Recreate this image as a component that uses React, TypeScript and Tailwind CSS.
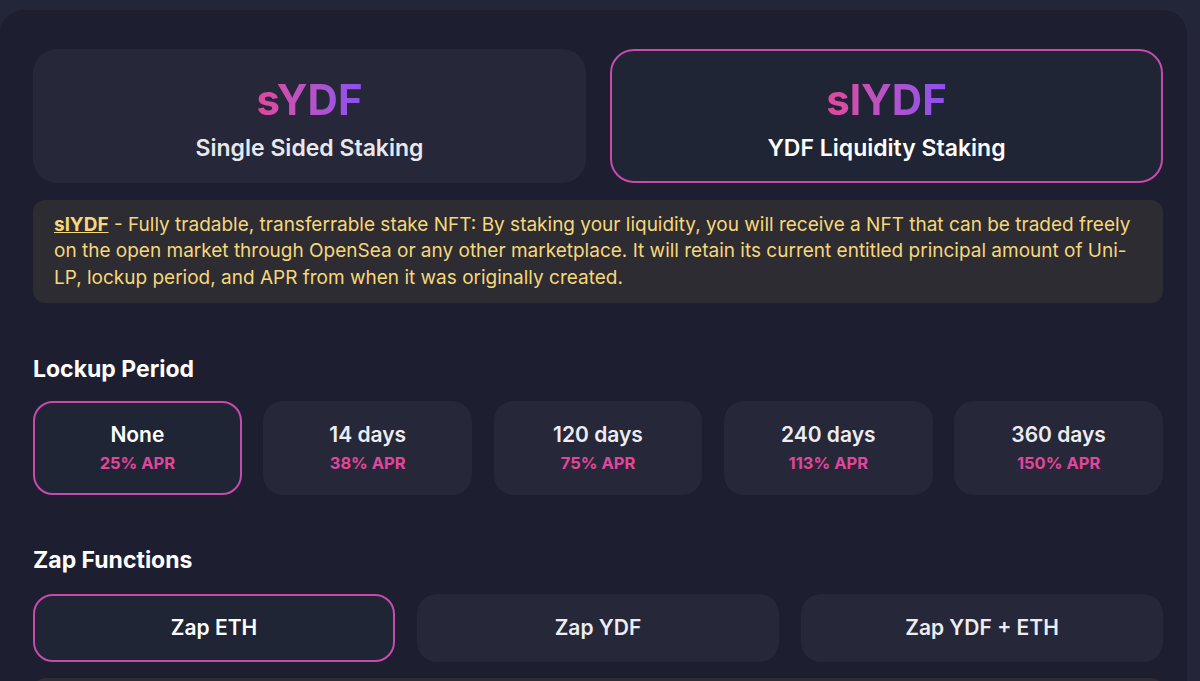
import { useState } from "react";

const lockups = [
    { label: "None", apr: "25% APR" },
    { label: "14 days", apr: "38% APR" },
    { label: "120 days", apr: "75% APR" },
    { label: "240 days", apr: "113% APR" },
    { label: "360 days", apr: "150% APR" },
];

const zaps = ["Zap ETH", "Zap YDF", "Zap YDF + ETH"];

const StakeCard = ({
    token,
    title,
    active,
    onClick,
}: {
    token: string;
    title: string;
    active: boolean;
    onClick: () => void;
}) => (
    <button
        onClick={onClick}
        className={`flex h-[134px] flex-col items-center justify-center rounded-[24px] border-2 pt-[6px] ${
            active ? "border-[#c64bad] bg-[#1f2535]" : "border-transparent bg-[#262738]"
        }`}
    >
        <span className="bg-gradient-to-r from-[#e2469b] to-[#8a4ff0] bg-clip-text text-[42px] font-bold leading-[48px] text-transparent">
            {token}
        </span>
        <span className={`mt-[10px] text-[23px] font-semibold leading-7 ${active ? "text-white" : "text-[#e8e8ee]"}`}>
            {title}
        </span>
    </button>
);

export default function App() {
    const [pool, setPool] = useState(1);
    const [lockup, setLockup] = useState(0);
    const [zap, setZap] = useState(0);

    return (
        <div
            className="min-h-[681px] bg-[#232538] pr-[13px] pt-[10px]"
            style={{ fontFamily: "Inter, 'Noto Sans', sans-serif" }}
        >
            <div className="h-[700px] rounded-tl-[24px] rounded-tr-[24px] bg-[#1d1e2f] pl-[33px] pr-[24px] pt-[39px]">
                <div className="grid grid-cols-2 gap-[24px]">
                    <StakeCard token="sYDF" title="Single Sided Staking" active={pool === 0} onClick={() => setPool(0)} />
                    <StakeCard token="slYDF" title="YDF Liquidity Staking" active={pool === 1} onClick={() => setPool(1)} />
                </div>

                <div className="mt-[17px] rounded-[12px] bg-[#2d2c32] px-[21px] py-[11.5px] text-[19px] leading-[26.5px] text-[#f6d77a]">
                    <span className="font-bold underline">slYDF</span> - Fully tradable, transferrable stake NFT: By
                    staking your liquidity, you will receive a NFT that can be traded freely on the open market through
                    OpenSea or any other marketplace. It will retain its current entitled principal amount of Uni-LP,
                    lockup period, and APR from when it was originally created.
                </div>

                <h2 className="mt-[52px] text-[23px] font-bold leading-7 text-white">Lockup Period</h2>
                <div className="mt-[18px] grid grid-cols-5 gap-[21.5px]">
                    {lockups.map((l, i) => (
                        <button
                            key={l.label}
                            onClick={() => setLockup(i)}
                            className={`flex h-[94px] flex-col items-center justify-center rounded-[20px] border-2 ${
                                lockup === i ? "border-[#c64bad] bg-[#1f2535]" : "border-transparent bg-[#262738]"
                            }`}
                        >
                            <span className={`text-[21px] font-semibold leading-7 ${lockup === i ? "text-white" : "text-[#ececf1]"}`}>
                                {l.label}
                            </span>
                            <span className="mt-[2px] text-[16.5px] font-bold leading-6 text-[#e2469b]">{l.apr}</span>
                        </button>
                    ))}
                </div>

                <h2 className="mt-[51px] text-[23px] font-bold leading-7 text-white">Zap Functions</h2>
                <div className="mt-[20px] grid grid-cols-3 gap-[22px]">
                    {zaps.map((z, i) => (
                        <button
                            key={z}
                            onClick={() => setZap(i)}
                            className={`flex h-[68px] items-center justify-center rounded-[20px] border-2 text-[21px] font-semibold ${
                                zap === i ? "border-[#c64bad] bg-[#1f2535] text-white" : "border-transparent bg-[#262738] text-[#ececf1]"
                            }`}
                        >
                            {z}
                        </button>
                    ))}
                </div>

                <div className="mt-[16px] h-[60px] rounded-[12px] bg-[#2d2c32]" />
            </div>
        </div>
    );
}
